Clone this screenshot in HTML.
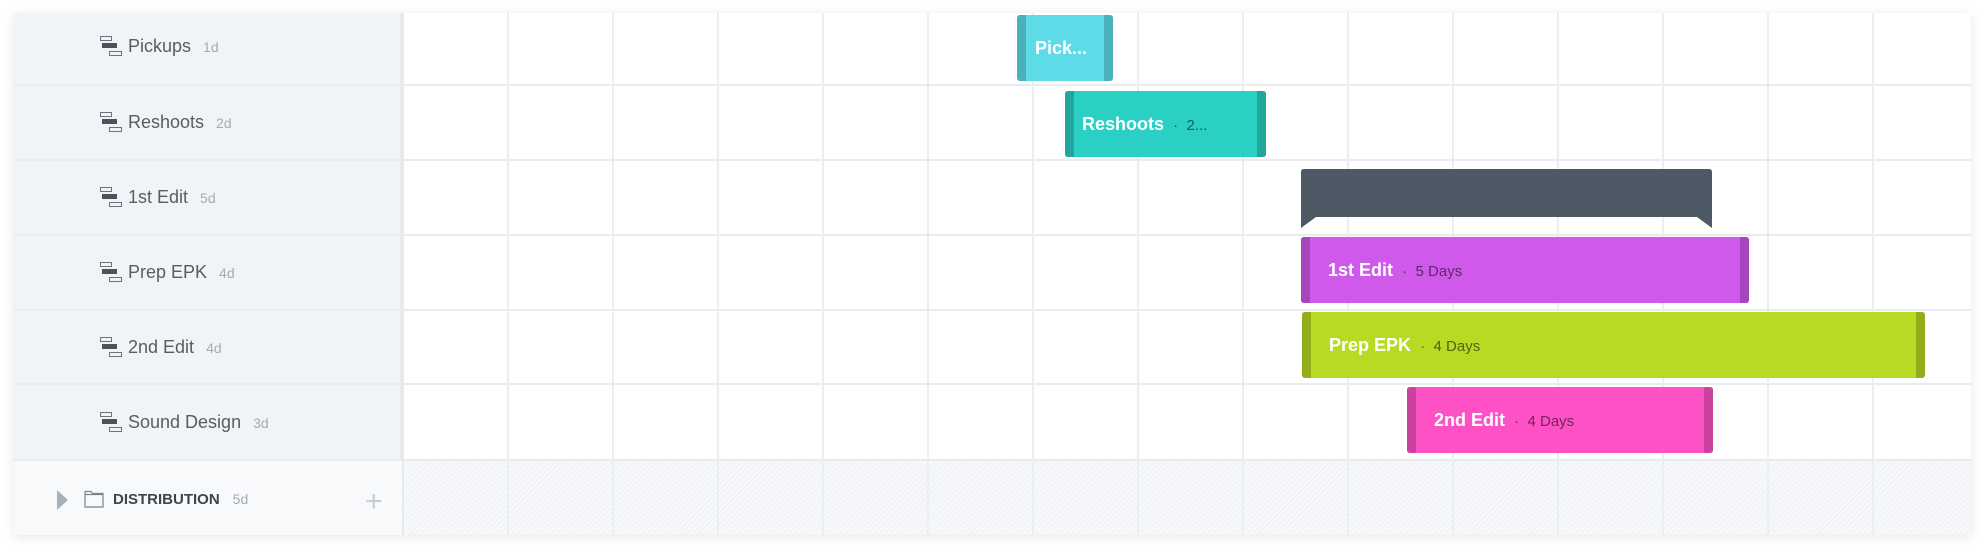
<!DOCTYPE html>
<html><head><meta charset="utf-8"><style>
*{margin:0;padding:0;box-sizing:border-box}
body{width:1986px;height:552px;background:#fff;font-family:"Liberation Sans",sans-serif;position:relative;overflow:hidden}
.panel{position:absolute;left:14px;top:13px;width:1957px;height:522px;box-shadow:0 2px 10px rgba(0,0,0,0.10);background:#fff}
.left{position:absolute;left:0;top:0;width:388px;height:522px;background:#f1f4f7;border-right:2px solid #e6e9ed}
.row{position:absolute;left:0;width:1957px;border-bottom:2px solid #e9ecef}
.lbl{position:absolute;left:114px;font-size:18px;color:#555d66}
.lbl small{font-size:14px;color:#a3abb4;margin-left:12px}
.ico{position:absolute;left:100px}
.vl{position:absolute;top:0;width:2px;height:447px;background:#eceff2}
.bar{position:absolute;border-radius:3px;color:#fff;font-weight:bold;font-size:18px;line-height:66px;padding-left:24px;white-space:nowrap;overflow:hidden}
.bar .e{position:absolute;top:0;width:9px;height:100%}
.bar span{font-weight:normal;font-size:15px;color:rgba(0,0,0,0.55)}
.hatch{position:absolute;left:390px;top:448px;width:1567px;height:74px;background:repeating-linear-gradient(135deg,#f7f8fa 0 3px,#eef0f3 3px 4px)}
</style></head><body>
<div class="panel">
<div class="hatch"></div>
<div class="left"></div>
<div style="position:absolute;left:0;top:447px;width:388px;height:75px;background:#f8f9fb"></div>
<div class="row" style="top:0;height:73px"></div>
<div class="row" style="top:73px;height:75px"></div>
<div class="row" style="top:148px;height:75px"></div>
<div class="row" style="top:223px;height:75px"></div>
<div class="row" style="top:298px;height:74px"></div>
<div class="row" style="top:372px;height:76px"></div>
<div class="vl" style="left:493px"></div><div class="vl" style="left:598px"></div><div class="vl" style="left:703px"></div><div class="vl" style="left:808px"></div><div class="vl" style="left:913px"></div><div class="vl" style="left:1018px"></div><div class="vl" style="left:1123px"></div><div class="vl" style="left:1228px"></div><div class="vl" style="left:1333px"></div><div class="vl" style="left:1438px"></div><div class="vl" style="left:1543px"></div><div class="vl" style="left:1648px"></div><div class="vl" style="left:1753px"></div><div class="vl" style="left:1858px"></div>
<div class="vl" style="left:493px;top:448px;height:74px"></div><div class="vl" style="left:598px;top:448px;height:74px"></div><div class="vl" style="left:703px;top:448px;height:74px"></div><div class="vl" style="left:808px;top:448px;height:74px"></div><div class="vl" style="left:913px;top:448px;height:74px"></div><div class="vl" style="left:1018px;top:448px;height:74px"></div><div class="vl" style="left:1123px;top:448px;height:74px"></div><div class="vl" style="left:1228px;top:448px;height:74px"></div><div class="vl" style="left:1333px;top:448px;height:74px"></div><div class="vl" style="left:1438px;top:448px;height:74px"></div><div class="vl" style="left:1543px;top:448px;height:74px"></div><div class="vl" style="left:1648px;top:448px;height:74px"></div><div class="vl" style="left:1753px;top:448px;height:74px"></div><div class="vl" style="left:1858px;top:448px;height:74px"></div>
<div style="position:absolute;left:388px;top:0;width:2px;height:522px;background:#e6e9ed"></div>
</div>
<svg width="0" height="0" style="position:absolute"><defs><symbol id="ti" viewBox="0 0 22 20"><rect x="0.5" y="0.5" width="11" height="4" fill="none" stroke="#6b737c"/><rect x="2" y="7" width="15" height="5" fill="#4b545d"/><rect x="9.5" y="15.5" width="12" height="4" fill="none" stroke="#6b737c"/></symbol></defs></svg>
<svg class="ico" style="top:36px" width="22" height="20"><use href="#ti"/></svg><div class="lbl" style="left:128px;top:36px">Pickups<small>1d</small></div>
<svg class="ico" style="top:112px" width="22" height="20"><use href="#ti"/></svg><div class="lbl" style="left:128px;top:112px">Reshoots<small>2d</small></div>
<svg class="ico" style="top:187px" width="22" height="20"><use href="#ti"/></svg><div class="lbl" style="left:128px;top:187px">1st Edit<small>5d</small></div>
<svg class="ico" style="top:262px" width="22" height="20"><use href="#ti"/></svg><div class="lbl" style="left:128px;top:262px">Prep EPK<small>4d</small></div>
<svg class="ico" style="top:337px" width="22" height="20"><use href="#ti"/></svg><div class="lbl" style="left:128px;top:337px">2nd Edit<small>4d</small></div>
<svg class="ico" style="top:412px" width="22" height="20"><use href="#ti"/></svg><div class="lbl" style="left:128px;top:412px">Sound Design<small>3d</small></div>
<svg style="position:absolute;left:57px;top:490px" width="12" height="20"><path d="M0 0L11 10L0 20Z" fill="#a7b1bb"/></svg>
<svg style="position:absolute;left:84px;top:490px" width="20" height="18"><path d="M1 1.5H7L8.5 3.5H19V17H1Z M1 4.5H19" fill="none" stroke="#7a828b" stroke-width="1.2"/></svg>
<div style="position:absolute;left:113px;top:491px;font-size:15px;font-weight:bold;color:#3d454d">DISTRIBUTION<span style="font-weight:normal;color:#a3abb4;font-size:14px;margin-left:13px">5d</span></div>
<div style="position:absolute;left:365px;top:485px;font-size:30px;color:#c5ccd3;font-weight:300">+</div>
<div class="bar" style="left:1017px;top:15px;width:96px;height:66px;background:#5fdbe8;padding-left:18px">Pick...<div class="e" style="left:0;background:#4bafbc"></div><div class="e" style="right:0;background:#4bafbc"></div></div>
<div class="bar" style="left:1065px;top:91px;width:201px;height:66px;background:#2ad0c4;padding-left:17px">Reshoots <span>&nbsp;·&nbsp; 2...</span><div class="e" style="left:0;background:#22a69c"></div><div class="e" style="right:0;background:#22a69c"></div></div>
<svg style="position:absolute;left:1301px;top:169px" width="411" height="60"><path d="M3 0H408Q411 0 411 3V59L396 48H15L0 59V3Q0 0 3 0Z" fill="#4d5a66"/></svg>
<div class="bar" style="left:1301px;top:237px;width:448px;height:66px;background:#cf59eb;padding-left:27px">1st Edit <span>&nbsp;·&nbsp; 5 Days</span><div class="e" style="left:0;background:#a646bc"></div><div class="e" style="right:0;background:#a646bc"></div></div>
<div class="bar" style="left:1302px;top:312px;width:623px;height:66px;background:#b8da22;padding-left:27px">Prep EPK <span>&nbsp;·&nbsp; 4 Days</span><div class="e" style="left:0;background:#93ae1b"></div><div class="e" style="right:0;background:#93ae1b"></div></div>
<div class="bar" style="left:1407px;top:387px;width:306px;height:66px;background:#fe51c6;padding-left:27px">2nd Edit <span>&nbsp;·&nbsp; 4 Days</span><div class="e" style="left:0;background:#cb419e"></div><div class="e" style="right:0;background:#cb419e"></div></div>
</body></html>
